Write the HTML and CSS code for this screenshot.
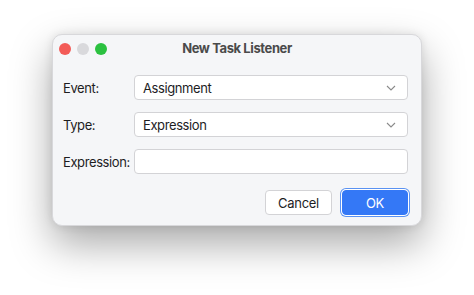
FILE: index.html
```html
<!DOCTYPE html>
<html lang="en">
<head>
    <meta charset="UTF-8">
    <title>New Task Listener</title>
    <link rel="stylesheet" href="styles.css">
</head>
<body>
    <div class="window">
        <div class="titlebar">
            <div class="lights">
                <span class="light red"></span>
                <span class="light grey"></span>
                <span class="light green"></span>
            </div>
            <div class="title">New Task Listener</div>
        </div>

        <div class="form">
            <div class="row">
                <label class="label">Event:</label>
                <div class="field select">
                    <span>Assignment</span>
                    <svg class="chevron" width="10" height="6" viewBox="0 0 10 6"><path d="M1 1 L5 5 L9 1" fill="none" stroke="#8a8a8a" stroke-width="1.1"/></svg>
                </div>
            </div>
            <div class="row">
                <label class="label">Type:</label>
                <div class="field select">
                    <span>Expression</span>
                    <svg class="chevron" width="10" height="6" viewBox="0 0 10 6"><path d="M1 1 L5 5 L9 1" fill="none" stroke="#8a8a8a" stroke-width="1.1"/></svg>
                </div>
            </div>
            <div class="row">
                <label class="label">Expression:</label>
                <div class="field"></div>
            </div>
        </div>

        <div class="buttons">
            <button class="btn">Cancel</button>
            <button class="btn primary">OK</button>
        </div>
    </div>
</body>
</html>
```

FILE: styles.css
```css
:root {
    --window-bg: #f5f6f8;
    --text-color: #1d1d1f;
    --title-color: #4a4a4a;
    --field-border: #d3d3d6;
    --accent: #3478f6;
}

html {
    height: 100%;
    background: #fff;
}

body {
    margin: 0;
    min-height: 100vh;
    padding-top: 34px;
    box-sizing: border-box;
    font-family: 'Inter', 'Liberation Sans', sans-serif;
    font-size: 13px;
    letter-spacing: -0.4px;
    color: var(--text-color);
}

.window {
    margin-left: 52px;
    width: 370px;
    height: 192px;
    box-sizing: border-box;
    background: var(--window-bg);
    border: 1px solid #d8d8db;
    border-radius: 10px;
    box-shadow: 0 18px 40px rgba(0,0,0,0.34), 0 0 10px rgba(0,0,0,0.10);
    display: flex;
    flex-direction: column;
}

.titlebar {
    height: 27px;
    display: flex;
    align-items: center;
    position: relative;
}

.lights {
    display: flex;
    gap: 6px;
    padding-left: 6px;
}

.light {
    width: 12px;
    height: 12px;
    border-radius: 50%;
}
.light.red { background: #f35b57; }
.light.grey { background: #d9d9dc; }
.light.green { background: #2bc140; }

.title {
    position: absolute;
    left: 0;
    right: 0;
    top: 5px;
    text-align: center;
    font-weight: 700;
    font-size: 13px;
    color: var(--title-color);
}

.form {
    display: flex;
    flex-direction: column;
    gap: 12px;
    padding: 13px 13px 0 10px;
}

.row {
    display: flex;
    align-items: center;
}

.label {
    width: 71px;
    flex-shrink: 0;
}

.field {
    flex: 1;
    height: 25px;
    box-sizing: border-box;
    background: #fff;
    border: 1px solid var(--field-border);
    border-radius: 4px;
    display: flex;
    align-items: center;
    padding: 0 8px;
}

.select {
    justify-content: space-between;
}

.chevron {
    margin-right: 3px;
}

.buttons {
    display: flex;
    justify-content: flex-end;
    gap: 10px;
    padding: 16px 13px 0 0;
}

.btn {
    font-family: 'Inter', 'Liberation Sans', sans-serif;
    font-size: 13px;
    letter-spacing: -0.3px;
    width: 67px;
    height: 25px;
    box-sizing: border-box;
    border: 1px solid var(--field-border);
    border-radius: 4px;
    background: #fff;
    color: var(--text-color);
    padding: 0;
}

.btn.primary {
    width: 66px;
    background: var(--accent);
    border-color: var(--accent);
    color: #fff;
    box-shadow: 0 0 0 1px #fff, 0 0 0 2px #5a92f2;
}
```
